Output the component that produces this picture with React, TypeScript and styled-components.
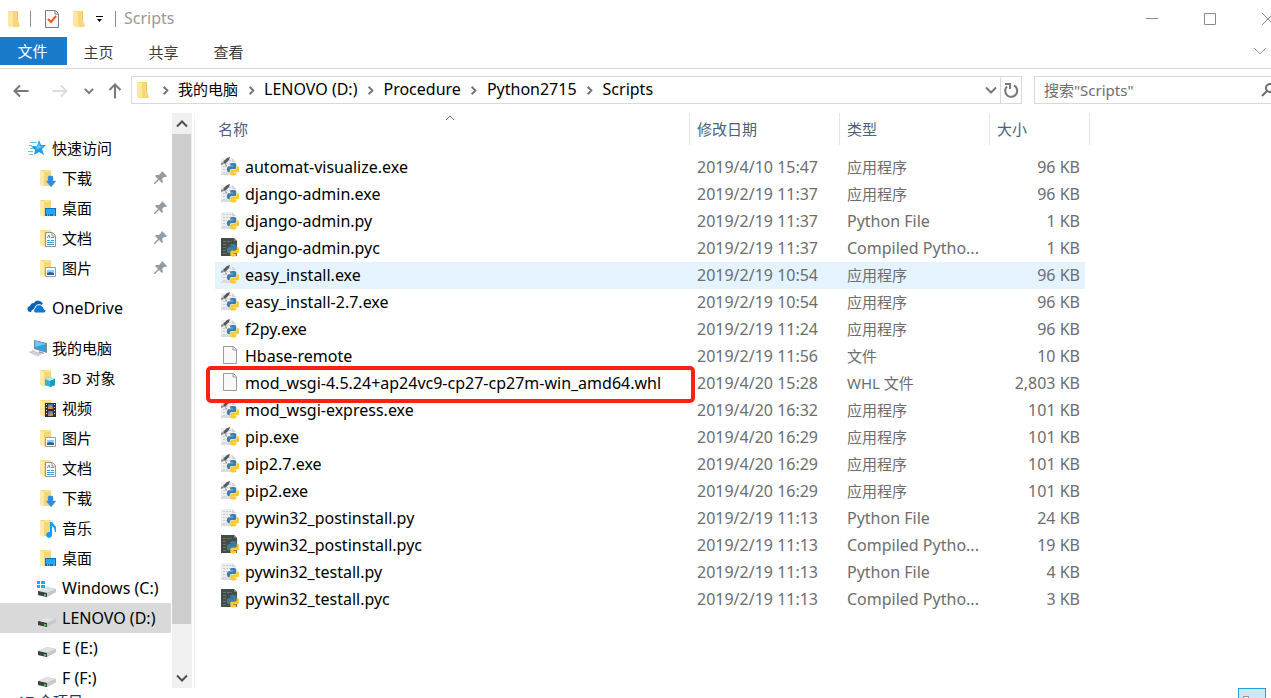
import React from "react";
import styled, { createGlobalStyle, css } from "styled-components";

const GlobalStyle = createGlobalStyle`
  *, *::before, *::after { box-sizing: border-box; }
  html, body { margin: 0; padding: 0; background: #fff; overflow: hidden; }
  body, button, input, table {
    font-family: "Noto Sans", "Noto Sans CJK SC", sans-serif;
    font-size: 15px;
    line-height: 20px;
  }
`;

const CJK = /[\u4e00-\u9fff]/;

/* Latin labels are set one pixel larger than Chinese ones. */
const Text = styled.span<{ $latin: boolean }>`
  font-size: ${(p) => (p.$latin ? 16 : 15)}px;
`;

const Label = ({ children }: { children: string }) => (
  <Text $latin={!CJK.test(children)}>{children}</Text>
);

const Viewport = styled.div`
  height: 100vh;
  overflow: hidden;
  background: #fff;
  color: #000;
`;

/* The window is a little wider than the screen and runs off its right edge. */
const Window = styled.div`
  display: flex;
  flex-direction: column;
  width: calc(100% + 26px);
  height: 100%;
`;

const PlainButton = styled.button`
  display: flex;
  align-items: center;
  justify-content: center;
  flex: none;
  margin: 0;
  padding: 0;
  border: 0;
  background: transparent;
  color: inherit;
`;

const TitleBar = styled.header`
  display: flex;
  align-items: center;
  flex: none;
  height: 37px;
  padding-left: 8px;
`;

const QuickTools = styled.div`
  display: flex;
  align-items: center;
  gap: 10px;
`;

const Rule = styled.span`
  width: 1px;
  height: 16px;
  background: #8c8c8c;
`;

const ToolButton = styled(PlainButton)<{ $width: number }>`
  width: ${(p) => p.$width}px;
  height: 20px;
`;

const Title = styled.h1`
  flex: 1;
  margin: 0 0 0 8px;
  padding-bottom: 2px;
  font-size: 16px;
  font-weight: 400;
  color: #999;
`;

const CaptionButton = styled(PlainButton)`
  width: 58px;
  height: 36px;
`;

const TabBar = styled.nav`
  display: flex;
  align-items: flex-start;
  flex: none;
  height: 32px;
  border-bottom: 1px solid #dadbdc;
`;

const Tab = styled(PlainButton)<{ $primary?: boolean }>`
  width: 65px;
  height: 28px;
  padding-top: 2px;
  padding-right: 2px;
  color: #3b3b3b;
  ${(p) =>
    p.$primary &&
    css`
      width: 67px;
      padding-top: 0;
      background: #1979ca;
      color: #fff;
    `}
`;

const RibbonToggle = styled(PlainButton)`
  width: 36px;
  height: 28px;
  margin: 0 19px 0 auto;
`;

const AddressRow = styled.div`
  display: flex;
  flex: none;
  padding: 7px 10px 9px 0;
`;

const NavButton = styled(PlainButton)<{ $width: number }>`
  width: ${(p) => p.$width}px;
  height: 28px;
  padding-top: 2px;
`;

const AddressBox = styled.div`
  display: flex;
  align-items: center;
  flex: 1;
  height: 28px;
  margin-left: 1px;
  padding-left: 5px;
  border: 1px solid #d9d9d9;
`;

const Crumbs = styled.div`
  display: flex;
  align-items: center;
  flex: 1;
  margin-left: 3px;
`;

const CrumbButton = styled(PlainButton)`
  padding-bottom: 2px;
`;

const CrumbArrow = styled.span`
  display: flex;
  justify-content: center;
  width: 26px;
`;

const RefreshButton = styled(PlainButton)`
  width: 21px;
  height: 26px;
  border-left: 1px solid #d9d9d9;
`;

const HistoryButton = styled(PlainButton)`
  width: 18px;
  height: 26px;
`;

const SearchBox = styled.label`
  display: flex;
  align-items: center;
  width: 253px;
  height: 28px;
  margin-left: 12px;
  padding: 0 11px 0 9px;
  border: 1px solid #d9d9d9;
`;

const SearchInput = styled.input`
  flex: 1;
  min-width: 0;
  padding: 0;
  border: 0;
  outline: 0;
  background: transparent;
  &::placeholder {
    color: #6d6d6d;
    opacity: 1;
  }
`;

const Body = styled.div`
  display: flex;
  flex: 1;
  min-height: 0;
  overflow: hidden;
`;

const Sidebar = styled.nav`
  width: 171px;
  flex: none;
  padding-top: 20px;
  overflow: hidden;
`;

const TreeGroup = styled.ul`
  margin: 0 0 10px;
  padding: 0;
  list-style: none;
`;

const TreeLink = styled.a<{ $child?: boolean; $selected?: boolean }>`
  display: flex;
  align-items: center;
  gap: 6px;
  height: 30px;
  padding-left: ${(p) => (p.$child ? 38 : 28)}px;
  padding-right: 4px;
  background: ${(p) => (p.$selected ? "#d9d9d9" : "transparent")};
  color: #000;
  text-decoration: none;
  white-space: nowrap;
  svg {
    flex: none;
  }
`;

const TreeLabel = styled.span`
  display: flex;
  flex: 1;
`;

const ScrollBar = styled.div`
  display: flex;
  flex-direction: column;
  flex: none;
  width: 20px;
  margin-left: 1px;
  background: #f0f0f0;
`;

const ScrollButton = styled(PlainButton)`
  width: 19px;
  height: 21px;
`;

const ScrollTrack = styled.div`
  flex: 1;
`;

const ScrollThumb = styled.div`
  width: 19px;
  height: 92%;
  background: #cdcdcd;
`;

const Main = styled.main`
  flex: 1;
  margin-left: 2px;
  padding-left: 20px;
  border-left: 1px solid #f3f3f3;
`;

const FileTable = styled.table`
  width: 875px;
  table-layout: fixed;
  border-spacing: 0;
  white-space: nowrap;
`;

const HeadCell = styled.th<{ $width: number; $first?: boolean }>`
  position: relative;
  width: ${(p) => p.$width}px;
  height: 32px;
  padding: 0 0 0 ${(p) => (p.$first ? 3 : 7)}px;
  border-right: 1px solid #e5e5e5;
  color: #4c607a;
  font-weight: 400;
  text-align: left;
`;

const SortMark = styled.span`
  position: absolute;
  top: 0;
  left: 0;
  right: 5px;
  display: flex;
  justify-content: center;
`;

const HeadGap = styled.tbody`
  td {
    height: 9px;
    padding: 0;
  }
`;

const FileRow = styled.tr<{ $hovered?: boolean }>`
  background: ${(p) => (p.$hovered ? "#e5f3ff" : "transparent")};
`;

const Cell = styled.td`
  height: 27px;
  padding: 0 0 2px 7px;
  color: #6d6d6d;
`;

const SizeCell = styled(Cell)`
  padding-right: 5px;
  border-right: 5px solid #fff;
  text-align: right;
`;

const NameCell = styled(Cell)<{ $marked?: boolean }>`
  padding-left: 6px;
  color: #000;
  ${(p) =>
    p.$marked &&
    css`
      position: relative;
      &::after {
        content: "";
        position: absolute;
        inset: -4px -5px -6px -9px;
        border: 4px solid #ff2015;
        border-radius: 5px;
      }
    `}
`;

const NameInner = styled.div`
  display: flex;
  align-items: center;
  gap: 6px;
  svg {
    flex: none;
  }
`;

const StatusBar = styled.footer`
  display: flex;
  align-items: flex-start;
  justify-content: space-between;
  flex: none;
  height: 10px;
  padding: 0 31px 0 17px;
  overflow: hidden;
  color: #1e395b;
`;

const StatusText = styled.span`
  padding-top: 3px;
`;

const ViewButton = styled(PlainButton)`
  align-items: flex-start;
  width: 28px;
  height: 24px;
  padding-top: 7px;
  border: 1px solid #26a0da;
  background: #cbe8f6;
`;

/* ---------- drawings ---------- */

const FolderShape = () => (
  <g>
    <path d="M2 1h11v15l-1 1H6z" fill="#f7d57a" />
    <path d="M6 1h7v2H6z" fill="#fae09a" />
    <path d="M2 1l4 2v15l-4-2z" fill="#ffeaae" />
  </g>
);

const FolderIcon = () => (
  <svg width="12" height="18" viewBox="2 0 12 18" aria-hidden="true">
    <path d="M2 1h10v9l2 6-1 1H7z" fill="#f8d67b" />
    <path d="M2 1l5 1v14l-1 2-4-2z" fill="#ffe79f" />
    <path d="M11 1h1v9h-1z" fill="#eec665" />
  </svg>
);

type TreeKind =
  | "star" | "cloud" | "pc" | "download" | "desktop" | "document"
  | "picture" | "cube" | "video" | "music" | "windrive" | "drive";

const DriveShape = () => (
  <g>
    <path d="M0 12l9-4 9 2v3l-9 5-9-2z" fill="#b9bbbd" />
    <path d="M0 12l9-4 9 2-9 4z" fill="#e0e1e3" />
    <path d="M0 12l9 2v4l-9-2z" fill="#3d3f40" />
    <path d="M9 14l9-4v3l-9 5z" fill="#c6c8ca" />
    <path d="M6 15h2v2H6z" fill="#39d353" />
  </g>
);

const overlays: Record<TreeKind, React.ReactNode> = {
  star: (
    <g>
      <path d="M11 1l2 5h5l-4 4 2 6-5-3-5 3 1-5-4-4h6z" fill="#1f9be8" />
      <path d="M11 3l1 4h4l-8 4 1-3-3-1h4z" fill="#62c4fa" />
      <path d="M2 3.500h7M1 6.500h3M2 9.500h4M0 12.500h5M1 15.500h4" stroke="#6fc0f2" strokeWidth="1" />
    </g>
  ),
  cloud: (
    <g>
      <path d="M3 13a3 3 0 0 1-1-6 4 4 0 0 1 4-3 5 5 0 0 1 9 1l-2 1-4 1-2 3-3 1z" fill="#0d62b8" />
      <path d="M7 14a3 3 0 0 1 0-5 4 4 0 0 1 7-2 3 3 0 0 1 2 3 2 2 0 0 1 0 4z" fill="#0b78d6" stroke="#fff" strokeWidth="1" />
    </g>
  ),
  pc: (
    <g>
      <path d="M6 1l13 3v10L6 10z" fill="#7f8b94" />
      <path d="M7 2l11 3v8L7 9z" fill="#2ba3e8" />
      <path d="M7 2l11 3L7 8z" fill="#6cc8f6" />
      <path d="M11 12l4 1 1 2-5-1z" fill="#9aa3aa" />
      <path d="M0 13l5-2 9 4-4 3z" fill="#d8dce0" />
      <path d="M2 13l9 3M4 12l9 3" stroke="#aab2b9" strokeWidth="0.5" />
    </g>
  ),
  download: (
    <g>
      <FolderShape />
      <path d="M10 7h5v5h3l-5 6-5-6h2z" fill="#2f8ad8" stroke="#67aee6" strokeWidth="0.5" />
    </g>
  ),
  desktop: (
    <g>
      <FolderShape />
      <path d="M7 9h11v8H7z" fill="#0f6fb8" />
      <path d="M8 10h9v5H8z" fill="#1ea7fb" />
      <path d="M9 16h1M11 16h1M15 16h2" stroke="#a5dcff" />
    </g>
  ),
  document: (
    <g>
      <FolderShape />
      <path d="M7.500 3.500h7l3 3v11h-10z" fill="#fff" stroke="#8f9699" />
      <path d="M14 4v3h3" fill="none" stroke="#8f9699" />
      <path d="M9 9l2-3 1 3M13 8.500h3M9 11.500h3M13 11.500h3M9 13.500h7M9 15.500h7" fill="none" stroke="#3c97d8" />
    </g>
  ),
  picture: (
    <g>
      <FolderShape />
      <path d="M7.500 8.500h10v9h-10z" fill="#fff" stroke="#96a0a5" />
      <path d="M9 11h7v5H9z" fill="#8ccbf3" />
      <path d="M9 14l3-1 4 1v2H9z" fill="#2c5d93" />
    </g>
  ),
  cube: (
    <g>
      <FolderShape />
      <path d="M7 10l5-2 5 2v6l-5 2-5-2z" fill="#2cb9cf" />
      <path d="M7 10l5-2 5 2-5 2z" fill="#a7eef5" />
      <path d="M12 12l5-2v6l-5 2z" fill="#159bb5" />
    </g>
  ),
  video: (
    <g>
      <FolderShape />
      <path d="M7 4h11v14H7z" fill="#2e2e30" />
      <path d="M10 5h5v5h-5zM10 12h5v5h-5z" fill="#3b78d8" />
      <path d="M10 8l3-2 2 3v1h-5zM10 16l3-3 2 2v2h-5z" fill="#d58b3a" />
      <path d="M8.500 5v12M16.500 5v12" stroke="#e9e9e9" strokeDasharray="1 2" />
    </g>
  ),
  music: (
    <g>
      <FolderShape />
      <path d="M12 3h2l4 5v5h-1l-1-4-2-2v8a3 3 0 1 1-2-2z" fill="#12a0f5" />
    </g>
  ),
  windrive: (
    <g>
      <DriveShape />
      <path d="M-1 2h3v3h-3zM3 2h4v3H3zM-1 6h3v3h-3zM3 6h4v3H3z" fill="#08b4f0" />
    </g>
  ),
  drive: <DriveShape />,
};

const TreeIcon = ({ kind }: { kind: TreeKind }) => (
  <svg width="18" height="18" viewBox="0 0 18 18" overflow="visible" aria-hidden="true">
    {overlays[kind]}
  </svg>
);

const PinIcon = () => (
  <svg width="13" height="14" viewBox="0 0 13 14" aria-hidden="true">
    <path d="M8 0l5 5-1 1h-2L8 8l1 3-1 1-3-3-4 4H0v-1l4-4-3-3 1-1h3l2-2z" fill="#929ca5" />
  </svg>
);

const PY_BLUE =
  "M14.25.18l.9.2.73.26.59.3.45.32.34.34.25.34.16.33.1.3.04.26.02.2-.01.13V8.5l-.05.63-.13.55-.21.46-.26.38-.3.31-.33.25-.35.19-.35.14-.33.1-.3.07-.26.04-.21.02H8.77l-.69.05-.59.14-.5.22-.41.27-.33.32-.27.35-.2.36-.15.37-.1.35-.07.32-.04.27-.02.21v3.06H3.17l-.21-.03-.28-.07-.32-.12-.35-.18-.36-.26-.36-.36-.35-.46-.32-.59-.28-.73-.21-.88-.14-1.05-.05-1.23.06-1.22.16-1.04.24-.87.32-.71.36-.57.4-.44.42-.33.42-.24.4-.16.36-.1.32-.05.24-.01h.16l.06.01h8.16v-.83H6.18l-.01-2.75-.02-.37.05-.34.11-.31.17-.28.25-.26.31-.23.38-.2.44-.18.51-.15.58-.12.64-.1.71-.06.77-.04.84-.02 1.27.05z";
const PY_YELLOW =
  "M21.1 6.11l.28.06.32.12.35.18.36.27.36.35.35.47.32.59.28.73.21.88.14 1.04.05 1.23-.06 1.23-.16 1.04-.24.86-.32.71-.36.57-.4.45-.42.33-.42.24-.4.16-.36.09-.32.05-.24.02-.16-.01h-8.22v.82h5.84l.01 2.76.02.36-.05.34-.11.31-.17.29-.25.25-.31.24-.38.2-.44.17-.51.15-.58.13-.64.09-.71.07-.77.04-.84.01-1.27-.04-1.07-.14-.9-.2-.73-.25-.59-.3-.45-.33-.34-.34-.25-.34-.16-.33-.1-.3-.04-.25-.02-.2.01-.13v-5.34l.05-.64.13-.54.21-.46.26-.38.3-.32.33-.24.35-.2.35-.14.33-.1.3-.06.26-.04.21-.02.13-.01h5.84l.69-.05.59-.14.5-.21.41-.28.33-.32.27-.35.2-.36.15-.36.1-.35.07-.32.04-.28.02-.21V6.07h2.09l.14.01z";

const PythonLogo = () => (
  <g transform="translate(6 6) scale(0.52)">
    <path d={PY_BLUE} fill="#3b7db3" />
    <path d={PY_YELLOW} fill="#fdcb2e" />
  </g>
);

type FileKind = "exe" | "py" | "pyc" | "blank";

const FileIcon = ({ kind }: { kind: FileKind }) => (
  <svg width="18" height="20" viewBox="0 0 18 20" aria-hidden="true">
    {kind === "blank" && (
      <g>
        <path d="M2.500 0.500h10l3 3v14h-13z" fill="#f8f8f8" stroke="#9a9a9a" />
        <path d="M12 1v3h3" fill="none" stroke="#9a9a9a" />
      </g>
    )}
    {(kind === "exe" || kind === "py") && (
      <g>
        <path d="M0 1h11l4 4v13H0z" fill="#eceef0" />
        <path d="M0 16h10l2 2H0z" fill="#d9dce0" />
        <path d="M2 3.500h8M2 6.500h9M2 9.500h4M2 12.500h4M2 15.500h4" stroke="#c9cdd2" strokeDasharray="2 1" />
        <path d="M11 1l4 4h-4z" fill="#d3d6da" />
      </g>
    )}
    {kind === "pyc" && (
      <g>
        <path d="M0 0h13l3 3v15H0z" fill="#454d49" />
        <path d="M2 3.500h9M2 6.500h4M2 9.500h3M2 12.500h3M2 15.500h4" stroke="#65716a" strokeDasharray="3 1" />
        <path d="M13 0l3 3h-3z" fill="#7b837e" />
      </g>
    )}
    {kind === "exe" && (
      <g>
        <path d="M9 0L8 3 4 7 2 5l4-4z" fill="#55595c" />
        <path d="M2 5L0 6v2l3-1zM4 7l2 1-1 2z" fill="#83888c" />
      </g>
    )}
    {kind !== "blank" && <PythonLogo />}
  </svg>
);

const Chevron = ({ dir, size = 8, color = "#787878", weight = 2 }: {
  dir: "up" | "down" | "right"; size?: number; color?: string; weight?: number;
}) => {
  const turn = { down: 0, up: 180, right: -90 }[dir];
  return (
    <svg width={size + 2} height={size + 2} viewBox="0 0 12 12" aria-hidden="true">
      <path
        d="M1 3.500l5 5 5-5"
        transform={`rotate(${turn} 6 6)`}
        fill="none"
        stroke={color}
        strokeWidth={(weight * 12) / (size + 2)}
      />
    </svg>
  );
};

const Arrow = ({ color, turn = 0 }: { color: string; turn?: number }) => (
  <svg width="16" height="16" viewBox="0 0 16 16" aria-hidden="true">
    <path d="M15.500 8H1.500M7 2.500L1.500 8 7 13.500" transform={`rotate(${turn} 8 8)`} fill="none" stroke={color} strokeWidth="2" />
  </svg>
);

/* ---------- data ---------- */

interface TreeItem { label: string; kind: TreeKind; pinned?: boolean; selected?: boolean }
const tree: { root: TreeItem; items: TreeItem[] }[] = [
  {
    root: { label: "快速访问", kind: "star" },
    items: [
      { label: "下载", kind: "download", pinned: true },
      { label: "桌面", kind: "desktop", pinned: true },
      { label: "文档", kind: "document", pinned: true },
      { label: "图片", kind: "picture", pinned: true },
    ],
  },
  { root: { label: "OneDrive", kind: "cloud" }, items: [] },
  {
    root: { label: "我的电脑", kind: "pc" },
    items: [
      { label: "3D 对象", kind: "cube" },
      { label: "视频", kind: "video" },
      { label: "图片", kind: "picture" },
      { label: "文档", kind: "document" },
      { label: "下载", kind: "download" },
      { label: "音乐", kind: "music" },
      { label: "桌面", kind: "desktop" },
      { label: "Windows (C:)", kind: "windrive" },
      { label: "LENOVO (D:)", kind: "drive", selected: true },
      { label: "E (E:)", kind: "drive" },
      { label: "F (F:)", kind: "drive" },
    ],
  },
];

interface FileItem { name: string; kind: FileKind; date: string; type: string; size: string }
const f = (name: string, kind: FileKind, date: string, type: string, size: string): FileItem => ({
  name, kind, date, type, size,
});
const files: FileItem[] = [
  f("automat-visualize.exe", "exe", "2019/4/10 15:47", "应用程序", "96 KB"),
  f("django-admin.exe", "exe", "2019/2/19 11:37", "应用程序", "96 KB"),
  f("django-admin.py", "py", "2019/2/19 11:37", "Python File", "1 KB"),
  f("django-admin.pyc", "pyc", "2019/2/19 11:37", "Compiled Pytho...", "1 KB"),
  f("easy_install.exe", "exe", "2019/2/19 10:54", "应用程序", "96 KB"),
  f("easy_install-2.7.exe", "exe", "2019/2/19 10:54", "应用程序", "96 KB"),
  f("f2py.exe", "exe", "2019/2/19 11:24", "应用程序", "96 KB"),
  f("Hbase-remote", "blank", "2019/2/19 11:56", "文件", "10 KB"),
  f("mod_wsgi-4.5.24+ap24vc9-cp27-cp27m-win_amd64.whl", "blank", "2019/4/20 15:28", "WHL 文件", "2,803 KB"),
  f("mod_wsgi-express.exe", "exe", "2019/4/20 16:32", "应用程序", "101 KB"),
  f("pip.exe", "exe", "2019/4/20 16:29", "应用程序", "101 KB"),
  f("pip2.7.exe", "exe", "2019/4/20 16:29", "应用程序", "101 KB"),
  f("pip2.exe", "exe", "2019/4/20 16:29", "应用程序", "101 KB"),
  f("pywin32_postinstall.py", "py", "2019/2/19 11:13", "Python File", "24 KB"),
  f("pywin32_postinstall.pyc", "pyc", "2019/2/19 11:13", "Compiled Pytho...", "19 KB"),
  f("pywin32_testall.py", "py", "2019/2/19 11:13", "Python File", "4 KB"),
  f("pywin32_testall.pyc", "pyc", "2019/2/19 11:13", "Compiled Pytho...", "3 KB"),
];

const HOVERED = 4;
const MARKED = 8;
const crumbs = ["我的电脑", "LENOVO (D:)", "Procedure", "Python2715", "Scripts"];

const TreeRow = ({ item, child }: { item: TreeItem; child?: boolean }) => (
  <li>
    <TreeLink href="#" $child={child} $selected={item.selected}>
      <TreeIcon kind={item.kind} />
      <TreeLabel><Label>{item.label}</Label></TreeLabel>
      {item.pinned && <PinIcon />}
    </TreeLink>
  </li>
);

export default function App() {
  return (
    <Viewport>
      <GlobalStyle />
      <Window>
        <TitleBar>
          <QuickTools>
            <FolderIcon />
            <Rule />
            <ToolButton $width={22} aria-label="属性">
              <svg width="16" height="18" viewBox="0 0 16 18" aria-hidden="true">
                <path d="M1.500 0.500h10l3 3v14h-13z" fill="#f7f7f7" stroke="#7d7d7d" />
                <path d="M11 1v3h3" fill="none" stroke="#7d7d7d" />
                <path d="M4 9l3 3 5-6" fill="none" stroke="#f05a1e" strokeWidth="2" />
              </svg>
            </ToolButton>
            <ToolButton $width={12} aria-label="新建文件夹">
              <FolderIcon />
            </ToolButton>
            <ToolButton $width={10} aria-label="自定义快速访问工具栏">
              <svg width="8" height="8" viewBox="0 0 8 8" aria-hidden="true">
                <path d="M0 1h7v1H0zM1 4h5L3.500 7z" fill="#000" />
              </svg>
            </ToolButton>
            <Rule />
          </QuickTools>
          <Title>Scripts</Title>
          <CaptionButton aria-label="最小化">
            <svg width="12" height="12" viewBox="0 0 12 12"><path d="M0 5.500h12" stroke="#8a8a8a" /></svg>
          </CaptionButton>
          <CaptionButton aria-label="最大化">
            <svg width="12" height="12" viewBox="0 0 12 12"><path d="M.5.5h11v11H.5z" fill="none" stroke="#8a8a8a" /></svg>
          </CaptionButton>
          <CaptionButton aria-label="关闭">
            <svg width="12" height="12" viewBox="0 0 12 12"><path d="M0 0l12 12M12 0L0 12" stroke="#8a8a8a" /></svg>
          </CaptionButton>
        </TitleBar>

        <TabBar>
          <Tab $primary>文件</Tab>
          <Tab>主页</Tab>
          <Tab>共享</Tab>
          <Tab>查看</Tab>
          <RibbonToggle aria-label="展开功能区">
            <Chevron dir="down" size={12} color="#8a8a8a" weight={1} />
          </RibbonToggle>
        </TabBar>

        <AddressRow>
          <NavButton $width={42} aria-label="后退"><Arrow color="#787878" /></NavButton>
          <NavButton $width={36} aria-label="前进"><Arrow color="#dcdcdc" turn={180} /></NavButton>
          <NavButton $width={22} aria-label="最近浏览的位置"><Chevron dir="down" /></NavButton>
          <NavButton $width={30} aria-label="上移"><Arrow color="#787878" turn={90} /></NavButton>
          <AddressBox>
            <FolderIcon />
            <Crumbs>
              {crumbs.map((c) => (
                <React.Fragment key={c}>
                  <CrumbArrow><Chevron dir="right" size={7} /></CrumbArrow>
                  <CrumbButton><Label>{c}</Label></CrumbButton>
                </React.Fragment>
              ))}
            </Crumbs>
            <HistoryButton aria-label="以前的位置"><Chevron dir="down" size={10} /></HistoryButton>
            <RefreshButton aria-label="刷新">
              <svg width="16" height="16" viewBox="0 0 16 16" aria-hidden="true">
                <path d="M11 3.500a6 6 0 1 1-7 1" fill="none" stroke="#787878" strokeWidth="2" />
                <path d="M2 2h5v5" fill="none" stroke="#787878" strokeWidth="2" />
              </svg>
            </RefreshButton>
          </AddressBox>
          <SearchBox>
            <SearchInput type="text" aria-label="搜索" placeholder={'搜索"Scripts"'} />
            <svg width="14" height="14" viewBox="0 0 14 14" aria-hidden="true">
              <circle cx="9" cy="5" r="4" fill="none" stroke="#6b6b6b" strokeWidth="2" />
              <path d="M6 8l-5 5" stroke="#6b6b6b" strokeWidth="2" />
            </svg>
          </SearchBox>
        </AddressRow>

        <Body>
          <Sidebar>
            {tree.map((g) => (
              <TreeGroup key={g.root.label}>
                <TreeRow item={g.root} />
                {g.items.map((it) => <TreeRow key={it.label} item={it} child />)}
              </TreeGroup>
            ))}
          </Sidebar>
          <ScrollBar>
            <ScrollButton aria-label="向上滚动"><Chevron dir="up" size={10} color="#505050" /></ScrollButton>
            <ScrollTrack><ScrollThumb /></ScrollTrack>
            <ScrollButton aria-label="向下滚动"><Chevron dir="down" size={10} color="#505050" /></ScrollButton>
          </ScrollBar>
          <Main>
            <FileTable>
              <thead>
                <tr>
                  <HeadCell $width={475} $first>
                    名称
                    <SortMark><Chevron dir="up" size={8} color="#6b6b6b" weight={1} /></SortMark>
                  </HeadCell>
                  <HeadCell $width={150}>修改日期</HeadCell>
                  <HeadCell $width={150}>类型</HeadCell>
                  <HeadCell $width={100}>大小</HeadCell>
                </tr>
              </thead>
              <HeadGap aria-hidden="true"><tr><td colSpan={4} /></tr></HeadGap>
              <tbody>
                {files.map((file, i) => (
                  <FileRow key={file.name} $hovered={i === HOVERED}>
                    <NameCell $marked={i === MARKED}>
                      <NameInner><FileIcon kind={file.kind} /><Label>{file.name}</Label></NameInner>
                    </NameCell>
                    <Cell><Label>{file.date}</Label></Cell>
                    <Cell><Label>{file.type}</Label></Cell>
                    <SizeCell><Label>{file.size}</Label></SizeCell>
                  </FileRow>
                ))}
              </tbody>
            </FileTable>
          </Main>
        </Body>

        <StatusBar>
          <StatusText>17 个项目</StatusText>
          <ViewButton aria-label="详细信息">
            <svg width="18" height="8" viewBox="0 0 18 8" aria-hidden="true">
              <path d="M.5.5h5v5h-5z" fill="#fff" stroke="#8f8f8f" />
              <path d="M7 2h5v1H7zM13 2h5v1h-5z" fill="#6b6b6b" />
            </svg>
          </ViewButton>
        </StatusBar>
      </Window>
    </Viewport>
  );
}
